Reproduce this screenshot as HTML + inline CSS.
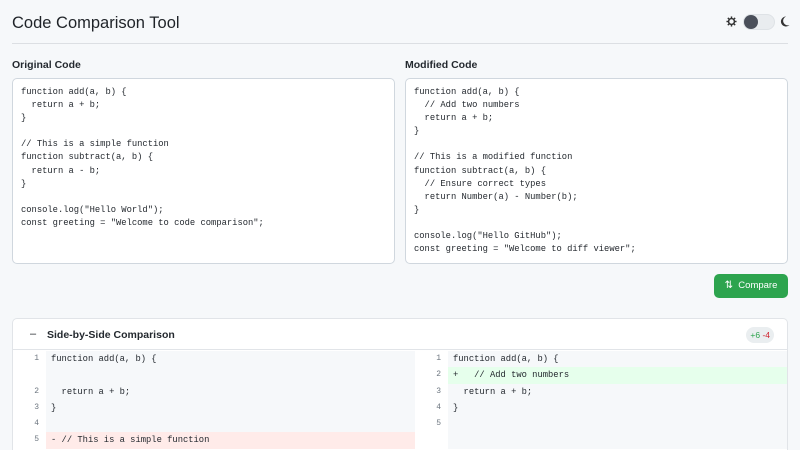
<!DOCTYPE html>
<html style="width:800px;height:450px;overflow:hidden"><head><meta charset="utf-8"><style>
*{box-sizing:border-box;margin:0;padding:0}
body{width:800px;height:450px;overflow:hidden;background:#f6f8fa;font-family:"Liberation Sans",sans-serif;color:#24292f;position:relative}
h1{position:absolute;left:12px;top:14px;font-size:16.5px;font-weight:normal;color:#1f2328}
.hr{position:absolute;left:12px;right:12px;top:43px;border-top:1px solid #dcdfe3}
.lbl{position:absolute;top:59px;font-size:10.5px;font-weight:bold}
.ta{position:absolute;top:78px;width:383px;height:186px;background:#fff;border:1px solid #d0d7de;border-radius:5px;padding:7px 8px;font-family:"Liberation Mono",monospace;font-size:8.8px;line-height:13.1px;white-space:pre;color:#24292f}
.btn{position:absolute;left:714px;top:274px;width:74px;height:24px;background:#2da44e;border-radius:5px;color:#fff;font-size:9.5px;line-height:24px;text-align:center}
.card{position:absolute;left:12px;top:318px;width:776px;height:132px;background:#fff;border:1px solid #e1e4e8;border-bottom:none;border-radius:5px 5px 0 0;overflow:hidden}
.ch{height:31px;border-bottom:1px solid #e1e4e8;position:relative}
.ch .t{position:absolute;left:34px;top:10px;font-size:10.5px;font-weight:bold}
.ch .m{position:absolute;left:17px;top:9px;font-size:11px}
.badge{position:absolute;right:13px;top:8px;background:#eaeef0;border-radius:8px;font-size:8.5px;padding:3px 4px}
.pane{position:absolute;top:32px;width:402px}
.row{height:16.3px;display:flex;font-family:"Liberation Mono",monospace;font-size:8.8px;line-height:16.3px;white-space:pre}
.n{width:33px;text-align:right;padding-right:7px;color:#6e7781;font-size:8px}
.c{flex:1;background:#f6f8fa;padding-left:5px}
.del .c{background:#ffebe9}.add .c{background:#e6ffec}
.emp .c{background:#f6f8fa}
</style></head><body>
<h1>Code Comparison Tool</h1>
<svg style="position:absolute;left:726px;top:16px" width="11" height="11" viewBox="0 0 12 12"><circle cx="6" cy="6" r="3.2" fill="none" stroke="#333" stroke-width="1.6"/><g stroke="#333" stroke-width="1.6"><line x1="6" y1="0.5" x2="6" y2="2.5"/><line x1="6" y1="9.5" x2="6" y2="11.5"/><line x1="0.5" y1="6" x2="2.5" y2="6"/><line x1="9.5" y1="6" x2="11.5" y2="6"/><line x1="2" y1="2" x2="3.4" y2="3.4"/><line x1="8.6" y1="8.6" x2="10" y2="10"/><line x1="2" y1="10" x2="3.4" y2="8.6"/><line x1="8.6" y1="3.4" x2="10" y2="2"/></g></svg>
<div style="position:absolute;left:743px;top:14px;width:32px;height:16px;border-radius:8px;background:#e9ecef;border:1px solid #dee2e6"></div>
<div style="position:absolute;left:744px;top:15px;width:14px;height:14px;border-radius:50%;background:#4a4f5a"></div>
<svg style="position:absolute;left:780px;top:16px" width="10" height="11" viewBox="0 0 10 11"><path d="M6 0.5A5 5 0 1 0 9.5 9 4 4 0 0 1 6 0.5z" fill="#333"/></svg>
<div class="hr"></div>
<div class="lbl" style="left:12px">Original Code</div>
<div class="lbl" style="left:405px">Modified Code</div>
<div class="ta" style="left:12px">function add(a, b) {
  return a + b;
}

// This is a simple function
function subtract(a, b) {
  return a - b;
}

console.log("Hello World");
const greeting = "Welcome to code comparison";</div>
<div class="ta" style="left:405px">function add(a, b) {
  // Add two numbers
  return a + b;
}

// This is a modified function
function subtract(a, b) {
  // Ensure correct types
  return Number(a) - Number(b);
}

console.log("Hello GitHub");
const greeting = "Welcome to diff viewer";</div>
<div class="btn"><span style="font-size:10px">⇅</span>&nbsp; Compare</div>
<div class="card">
<div class="ch"><span class="m">–</span><span class="t">Side-by-Side Comparison</span><span class="badge"><span style="color:#2da44e">+6</span> <span style="color:#cf222e">-4</span></span></div>
<div class="pane" style="left:0">
<div class="row"><div class="n">1</div><div class="c">function add(a, b) {</div></div>
<div class="row emp"><div class="n"></div><div class="c"></div></div>
<div class="row"><div class="n">2</div><div class="c">  return a + b;</div></div>
<div class="row"><div class="n">3</div><div class="c">}</div></div>
<div class="row"><div class="n">4</div><div class="c"></div></div>
<div class="row del"><div class="n">5</div><div class="c">- // This is a simple function</div></div>
</div>
<div class="pane" style="left:402px;width:374px">
<div class="row"><div class="n">1</div><div class="c">function add(a, b) {</div></div>
<div class="row add"><div class="n">2</div><div class="c">+   // Add two numbers</div></div>
<div class="row"><div class="n">3</div><div class="c">  return a + b;</div></div>
<div class="row"><div class="n">4</div><div class="c">}</div></div>
<div class="row"><div class="n">5</div><div class="c"></div></div>
<div class="row emp"><div class="n"></div><div class="c"></div></div>
</div>
</div>
</body></html>
